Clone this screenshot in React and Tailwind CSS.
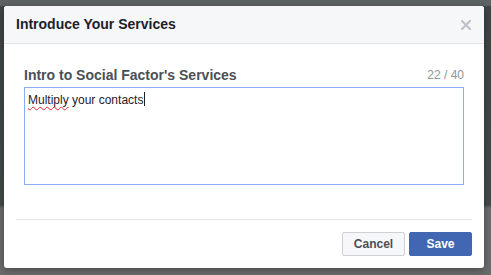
const App = () => {
  return (
    <div className="h-[275px] w-[491px] overflow-hidden bg-[linear-gradient(to_bottom,#5d6363_0px,#5d6363_6px,#3f4545_6px,#444a4a_205px,#6c6c6c_208px,#6c6c6c_100%)] px-[4px] pt-[6px] font-['Liberation_Sans',Arial,sans-serif]">
      <div className="w-[480px] overflow-hidden rounded-[3px] bg-white shadow-[0_2px_8px_rgba(0,0,0,0.35)]">
        <div className="flex h-[38px] items-center justify-between border-b border-[#e5e5e5] bg-[#f6f7f9] pl-[12px] pr-[13px]">
          <span className="text-[14px] font-bold text-[#1d2129]">Introduce Your Services</span>
          <svg width="10" height="10" viewBox="0 0 10 10" className="text-[#bec2c9]">
            <path d="M1 1 L9 9 M9 1 L1 9" stroke="currentColor" strokeWidth="2.2" strokeLinecap="square" />
          </svg>
        </div>
        <div className="px-[20px] pt-[22px] pb-[34px]">
          <div className="flex h-[18px] items-center justify-between">
            <span className="text-[14px] font-bold text-[#4b4f56]">Intro to Social Factor's Services</span>
            <span className="text-[12px] text-[#90949c]">22 / 40</span>
          </div>
          <div className="mt-[3px] h-[98px] w-[440px] border border-[#8cabf2] px-[3px] pt-[2px] text-[12px] leading-[15px] text-[#1d2129]">
            <span className="underline decoration-[#e0282e] decoration-wavy decoration-1 underline-offset-2">Multiply</span>
            <span> your contacts</span>
            <span className="ml-[1px] inline-block h-[14px] w-px translate-y-[2px] bg-[#1d2129]" />
          </div>
        </div>
        <div className="mx-[12px] border-t border-[#e5e5e5]" />
        <div className="flex justify-end gap-[4px] px-[12px] pt-[12px] pb-[12px]">
          <button className="h-[24px] w-[63px] rounded-[2px] border border-[#ced0d4] bg-[#f6f7f9] text-[12px] font-bold text-[#4b4f56]">
            Cancel
          </button>
          <button className="h-[24px] w-[63px] rounded-[2px] border border-[#4267b2] bg-[#4267b2] text-[12px] font-bold text-white">
            Save
          </button>
        </div>
      </div>
    </div>
  )
}

export default App
